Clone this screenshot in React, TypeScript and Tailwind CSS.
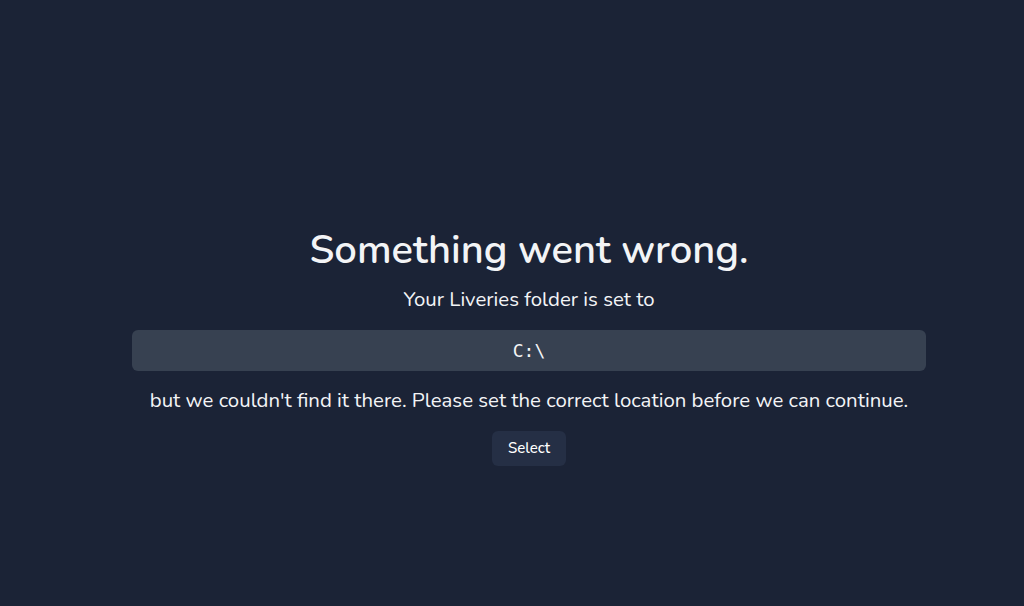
export default function App() {
  return (
    <div
      className="w-full h-[606px] bg-[#1b2336] text-[#f3f4f6] flex flex-col items-center pl-[34px] pt-[228px]"
      style={{ fontFamily: 'Nunito, Lato, "Open Sans", sans-serif' }}
    >
      <h1 className="text-[40px] leading-[44px] font-semibold">Something went wrong.</h1>
      <p className="mt-[14px] text-[20.4px] leading-[26px]">Your Liveries folder is set to</p>
      <div className="mt-[18px] w-[794px] h-[41px] rounded-md bg-[#374151] flex items-center justify-center">
        <span className="text-[18px]" style={{ fontFamily: '"DejaVu Sans Mono", monospace' }}>
          C:\
        </span>
      </div>
      <p className="mt-[16px] text-[20.4px] leading-[26px]">
        but we couldn't find it there. Please set the correct location before we can continue.
      </p>
      <button className="mt-[18px] w-[74px] h-[35px] rounded-md bg-[#252f45] text-[15px] font-medium text-white">
        Select
      </button>
    </div>
  );
}
